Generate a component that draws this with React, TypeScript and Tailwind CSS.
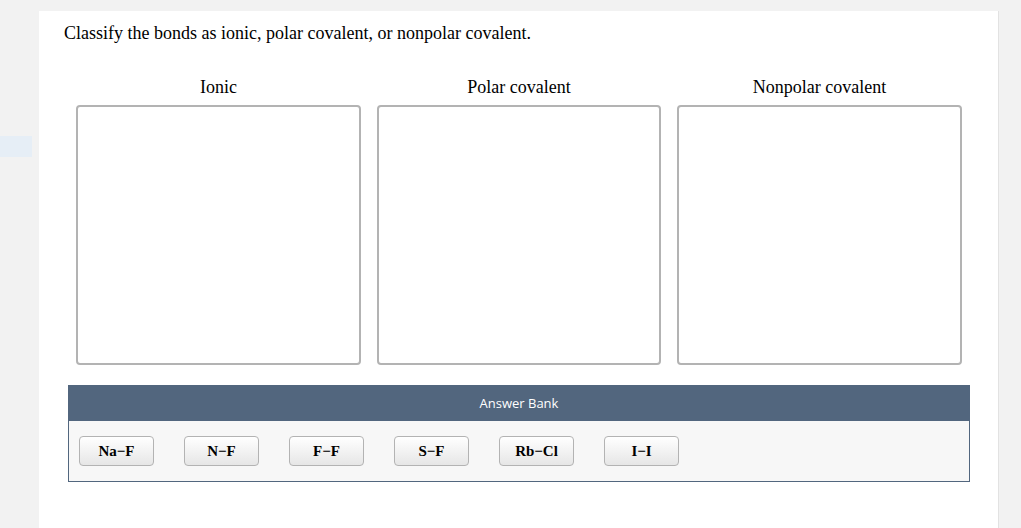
import React from 'react'

const bins = [
    { label: 'Ionic', width: 'w-[285px]' },
    { label: 'Polar covalent', width: 'w-[284px]' },
    { label: 'Nonpolar covalent', width: 'w-[285px]' },
]
const answers = ['Na−F', 'N−F', 'F−F', 'S−F', 'Rb−Cl', 'I−I']

const App = () => {
    return (
        <div className="relative min-h-[528px] bg-[#f2f2f2] overflow-hidden">
            <div className="absolute left-0 top-[136px] w-[32px] h-[21px] bg-[#e6eef6]" />
            <div
                className="ml-[39px] pt-[11px] w-[960px] min-h-[528px]"
                style={{ fontFamily: '"Liberation Serif", "Times New Roman", serif' }}
            >
                <div className="bg-white min-h-[517px] border-r border-[#e2e2e2] pl-[25px] pt-[12px]">
                    <p className="text-[18px] leading-[20px] text-black">
                        Classify the bonds as ionic, polar covalent, or nonpolar covalent.
                    </p>

                    <div className="mt-[34px] ml-[12px] flex gap-[16px]">
                        {bins.map((b) => (
                            <div key={b.label} className={b.width}>
                                <div className="text-center text-[18px] leading-[20px] text-black">{b.label}</div>
                                <div className="mt-[8px] h-[260px] border-2 border-[#b3b3b3] rounded-[4px] bg-white" />
                            </div>
                        ))}
                    </div>

                    <div className="mt-[20px] ml-[4px] w-[902px] border border-[#52667e]">
                        <div
                            className="h-[35px] bg-[#52667e] text-white text-[13px] flex items-center justify-center"
                            style={{ fontFamily: '"Open Sans", "Noto Sans", sans-serif' }}
                        >
                            Answer Bank
                        </div>
                        <div className="h-[60px] bg-[#f7f7f7] flex items-center gap-[30px] pl-[10px]">
                            {answers.map((a) => (
                                <button
                                    key={a}
                                    type="button"
                                    className="w-[75px] h-[30px] rounded-[4px] border border-[#b3b3b3] bg-gradient-to-b from-white to-[#e6e6e6] text-[15px] font-bold text-black"
                                >
                                    {a}
                                </button>
                            ))}
                        </div>
                    </div>
                </div>
            </div>
        </div>
    )
}

export default App
